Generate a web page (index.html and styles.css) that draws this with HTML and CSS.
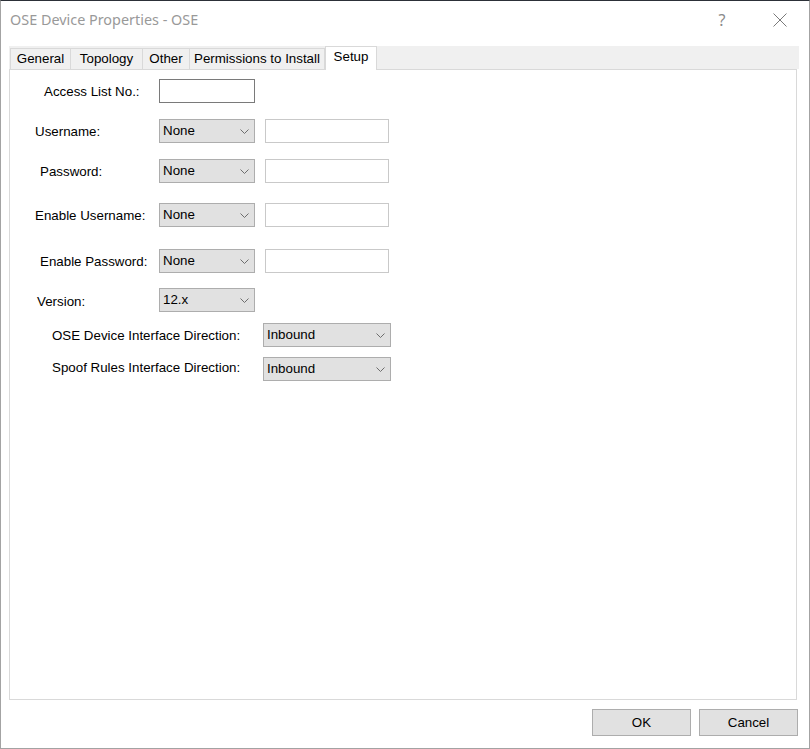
FILE: index.html
```html
<!DOCTYPE html>
<html>
<head>
<meta charset="utf-8">
<link rel="stylesheet" href="styles.css">
</head>
<body>
<div class="window">
  <div class="titlebar">
    <span class="title">OSE Device Properties - OSE</span>
    <span class="help">?</span>
    <svg class="close" width="14" height="14" viewBox="0 0 14 14"><path d="M0.5 0.5 L13.5 13.5 M13.5 0.5 L0.5 13.5" stroke="#7a7a7a" stroke-width="1" fill="none"/></svg>
  </div>
  <div class="tabs">
    <div class="tab t-general">General</div>
    <div class="tab t-topology">Topology</div>
    <div class="tab t-other">Other</div>
    <div class="tab t-perm">Permissions to Install</div>
    <div class="tab active t-setup">Setup</div>
  </div>
  <div class="panel">
    <div class="row r1"><span class="label p34">Access List No.:</span><div class="textbox dark"></div></div>
    <div class="row r2"><span class="label p25">Username:</span><div class="combo"><span>None</span><svg class="chev" width="9" height="5" viewBox="0 0 9 5"><path d="M0.5 0.5 L4.5 4.5 L8.5 0.5" stroke="#6d6d6d" fill="none"/></svg></div><div class="textbox"></div></div>
    <div class="row r3"><span class="label p30">Password:</span><div class="combo"><span>None</span><svg class="chev" width="9" height="5" viewBox="0 0 9 5"><path d="M0.5 0.5 L4.5 4.5 L8.5 0.5" stroke="#6d6d6d" fill="none"/></svg></div><div class="textbox"></div></div>
    <div class="row r4"><span class="label p25">Enable Username:</span><div class="combo"><span>None</span><svg class="chev" width="9" height="5" viewBox="0 0 9 5"><path d="M0.5 0.5 L4.5 4.5 L8.5 0.5" stroke="#6d6d6d" fill="none"/></svg></div><div class="textbox"></div></div>
    <div class="row r5"><span class="label p30">Enable Password:</span><div class="combo"><span>None</span><svg class="chev" width="9" height="5" viewBox="0 0 9 5"><path d="M0.5 0.5 L4.5 4.5 L8.5 0.5" stroke="#6d6d6d" fill="none"/></svg></div><div class="textbox"></div></div>
    <div class="row r6"><span class="label p27 low">Version:</span><div class="combo"><span>12.x</span><svg class="chev" width="9" height="5" viewBox="0 0 9 5"><path d="M0.5 0.5 L4.5 4.5 L8.5 0.5" stroke="#6d6d6d" fill="none"/></svg></div></div>
    <div class="row r7"><span class="label wide p42">OSE Device Interface Direction:</span><div class="combo wide-combo"><span>Inbound</span><svg class="chev" width="9" height="5" viewBox="0 0 9 5"><path d="M0.5 0.5 L4.5 4.5 L8.5 0.5" stroke="#6d6d6d" fill="none"/></svg></div></div>
    <div class="row r8"><span class="label wide p42 high">Spoof Rules Interface Direction:</span><div class="combo wide-combo"><span>Inbound</span><svg class="chev" width="9" height="5" viewBox="0 0 9 5"><path d="M0.5 0.5 L4.5 4.5 L8.5 0.5" stroke="#6d6d6d" fill="none"/></svg></div></div>
  </div>
  <div class="footer">
    <button class="btn">OK</button>
    <button class="btn">Cancel</button>
  </div>
</div>
</body>
</html>
```
FILE: styles.css
```css
html, body {
  margin: 0;
  padding: 0;
}
body {
  width: 810px;
  height: 749px;
  overflow: hidden;
  background: #fff;
  font-family: "Liberation Sans", Arial, sans-serif;
  font-size: 13.33px;
  color: #000;
}
.window {
  box-sizing: border-box;
  width: 810px;
  height: 749px;
  border: 1px solid #a3a3a3;
  border-top-color: #2c3038;
  display: flex;
  flex-direction: column;
  background: #fff;
}
.titlebar {
  height: 45px;
  flex: none;
  display: flex;
  align-items: flex-start;
}
.title {
  margin-left: 9px;
  margin-top: 8px;
  font-family: "Noto Sans", "Open Sans", sans-serif;
  font-size: 14.4px;
  line-height: 22px;
  color: #999;
}
.help {
  margin-left: auto;
  width: 10px;
  margin-right: 46px;
  margin-top: 9px;
  font-family: "Noto Sans", sans-serif;
  font-size: 16px;
  line-height: 20px;
  color: #8a8a8a;
  text-align: center;
}
.close {
  margin-top: 12px;
  margin-right: 22px;
  flex: none;
}
.tabs {
  flex: none;
  margin-left: 8px;
  width: 790px;
  height: 23px;
  box-sizing: border-box;
  padding-left: 1px;
  background: #f0f0f0;
  display: flex;
  align-items: flex-end;
}
.tab {
  height: 21px;
  box-sizing: border-box;
  border: 1px solid #d9d9d9;
  border-bottom: none;
  border-left: none;
  padding: 0;
  line-height: 20px;
  background: #f0f0f0;
  white-space: nowrap;
  text-align: center;
  flex: none;
}
.tab:first-child {
  border-left: 1px solid #d9d9d9;
}
.t-general { width: 61px; }
.t-topology { width: 72px; }
.t-other { width: 47px; }
.t-perm { width: 135px; }
.t-setup { width: 52px; }
.tab.active {
  height: 24px;
  margin-bottom: -1px;
  padding-bottom: 3px;
  background: #fff;
  position: relative;
  z-index: 1;
  border-left: 1px solid #d9d9d9;
}
.panel {
  flex: none;
  margin-left: 8px;
  width: 788px;
  height: 631px;
  box-sizing: border-box;
  border: 1px solid #d9d9d9;
  background: #fff;
  padding-top: 9px;
  display: flex;
  flex-direction: column;
}
.row {
  display: flex;
  align-items: center;
  height: 24px;
  flex: none;
}
.r2, .r3 { margin-top: 16px; }
.r4 { margin-top: 20px; }
.r5 { margin-top: 22px; }
.r6 { margin-top: 15px; }
.r7 { margin-top: 11px; }
.r8 { margin-top: 10px; }
.label {
  width: 149px;
  box-sizing: border-box;
  white-space: nowrap;
  flex: none;
}
.label.wide { width: 253px; }
.p25 { padding-left: 25px; }
.p27 { padding-left: 27px; }
.p30 { padding-left: 30px; }
.p34 { padding-left: 34px; }
.p42 { padding-left: 42px; }
.low { padding-top: 3px; }
.high { padding-bottom: 4px; }
.combo {
  width: 96px;
  height: 24px;
  box-sizing: border-box;
  border: 1px solid #adadad;
  background: #e1e1e1;
  display: flex;
  align-items: center;
  justify-content: space-between;
  padding: 0 5px 1px 3px;
  flex: none;
}
.combo.wide-combo { width: 128px; }
.chev { flex: none; margin-top: 1px; }
.textbox {
  width: 124px;
  height: 24px;
  box-sizing: border-box;
  border: 1px solid #c9c9c9;
  background: #fff;
  margin-left: 10px;
  flex: none;
}
.textbox.dark {
  width: 96px;
  margin-left: 0;
  border-color: #7a7a7a;
}
.footer {
  flex: none;
  display: flex;
  justify-content: flex-end;
  gap: 8px;
  margin-top: 9px;
  padding-right: 11px;
}
.btn {
  width: 99px;
  height: 27px;
  box-sizing: border-box;
  border: 1px solid #adadad;
  background: #e1e1e1;
  font-family: "Liberation Sans", Arial, sans-serif;
  font-size: 13.33px;
  color: #000;
  padding: 0;
  margin: 0;
}
```
